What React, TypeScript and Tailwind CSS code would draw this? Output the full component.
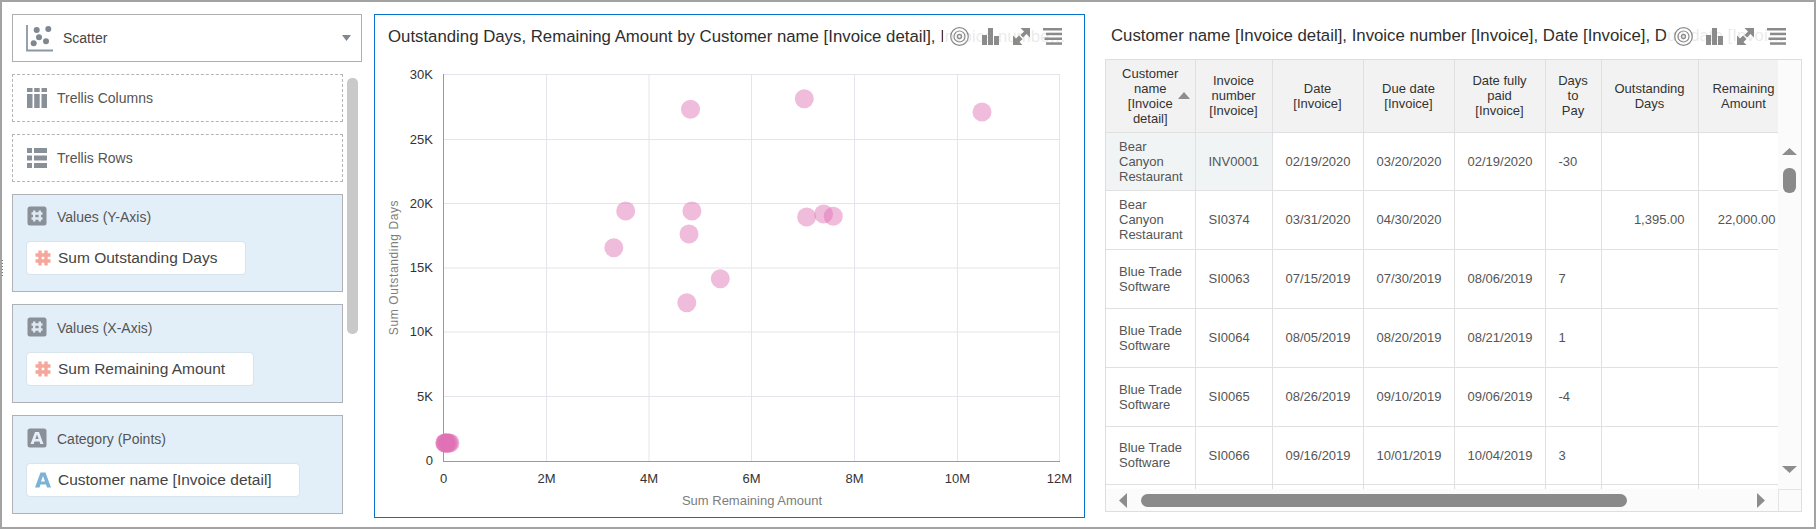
import React from "react";

const font = "font-['Liberation_Sans',Arial,sans-serif]";

function HashBadge() {
  return (
    <svg width="20" height="20" viewBox="0 0 20 20" className="shrink-0">
      <rect x="0.5" y="0.5" width="19" height="19" rx="2.5" fill="#8a9097" />
      <path d="M7.2 4.5v11M12.8 4.5v11M4.5 7.5h11M4.5 12.5h11" stroke="#dfe9f2" strokeWidth="2.4" fill="none" />
    </svg>
  );
}
function ABadge() {
  return (
    <svg width="20" height="20" viewBox="0 0 20 20" className="shrink-0">
      <rect x="0.5" y="0.5" width="19" height="19" rx="2.5" fill="#8a9097" />
      <path d="M3.5 16 8 4h4l4.5 12h-3.2l-.8-2.4h-5l-.8 2.4zM8.3 11h3.4L10 6.5z" fill="#e6eff7" fillRule="evenodd" />
    </svg>
  );
}
function HashChip() {
  return (
    <svg width="16" height="16" viewBox="0 0 16 16" className="shrink-0">
      <path d="M5 0.5v15M11 0.5v15M0.5 5h15M0.5 11h15" stroke="#f5a79c" strokeWidth="3.4" fill="none" />
    </svg>
  );
}
function AChip() {
  return (
    <svg width="16" height="16" viewBox="0 0 16 16" className="shrink-0">
      <path d="M0 15.5 5.5 0.5h5l5.500 15h-4l-1-3h-5.500l-1 3zM6 9.500h4L8 4z" fill="#7cb2d6" fillRule="evenodd" />
    </svg>
  );
}

function TitleIcons() {
  return (
    <>
      <svg width="19" height="19" viewBox="0 0 19 19" fill="none" stroke="#8b8b8b">
        <circle cx="9.500" cy="9.500" r="8.800" strokeWidth="1.200" />
        <circle cx="9.500" cy="9.500" r="5.500" strokeWidth="1.200" />
        <circle cx="9.500" cy="9.500" r="2" strokeWidth="1.300" />
      </svg>
      <svg width="17" height="17" viewBox="0 0 17 17" fill="#8b8b8b">
        <rect x="0" y="7" width="5" height="10" />
        <rect x="6" y="0" width="5" height="17" />
        <rect x="12" y="8" width="5" height="9" />
      </svg>
      <svg width="17" height="17" viewBox="0 0 17 17" fill="#8b8b8b">
        <path d="M7.500 0H17V9.500L13.500 6 10 9.500 7.500 7 11 3.500z" />
        <path d="M0 7.500 3 10.500 6 7.500 9.500 11 6.500 14 9.500 17H0z" />
      </svg>
      <svg width="19" height="17" viewBox="0 0 19 17" fill="#8b8b8b">
        <rect x="0" y="0" width="19" height="2.500" />
        <rect x="3" y="4.700" width="16" height="2.500" />
        <rect x="1.500" y="9.500" width="17.500" height="2.500" />
        <rect x="3" y="14.300" width="16" height="2.500" />
      </svg>
    </>
  );
}

function Drop({ icon, label }: { icon: React.ReactNode; label: string }) {
  return (
    <div className="h-[48px] shrink-0 border border-dashed border-[#b5b5b5] flex items-center pl-[14px] gap-[10px] text-[14px] text-[#555]">
      {icon}
      <span>{label}</span>
    </div>
  );
}

function Well({ badge, label, chipIcon, chip, chipW, boxH, padT }: { badge: React.ReactNode; label: string; chipIcon: React.ReactNode; chip: string; chipW: string; boxH: string; padT: string }) {
  return (
    <div className={`shrink-0 border border-[#aeb2b6] bg-[#e2eff9] pl-[13px] ${boxH} ${padT}`}>
      <div className="flex items-center gap-[10px] h-[20px] ml-px text-[14px] text-[#555]">
        {badge}
        <span className="mt-[2px]">{label}</span>
      </div>
      <div className={`mt-[15px] h-[34px] bg-white rounded-[4px] border border-[#d9e3ec] flex items-center pl-[8px] gap-[7px] text-[15.500px] text-[#444] ${chipW}`}>
        {chipIcon}
        <span className="whitespace-nowrap">{chip}</span>
      </div>
    </div>
  );
}

const xs = [443.5, 546.5, 649, 751.5, 854.5, 957.5, 1059.5];
const xl = ["0", "2M", "4M", "6M", "8M", "10M", "12M"];
const ys = [461, 396.5, 332, 268, 203.5, 139.5, 74.5];
const yl = ["0", "5K", "10K", "15K", "20K", "25K", "30K"];
const pts: [number, number][] = [
  [690.5, 109.3], [804.3, 98.7], [982, 112], [625.7, 211], [691.9, 211], [689, 234], [613.8, 247.7],
  [806.6, 217], [823.6, 214], [833.3, 216.3], [720.3, 278.7], [686.8, 302.7],
  [445, 443], [446, 443], [447, 443], [448, 443], [450, 443], [445.500, 443], [444.800, 443], [449, 443],
];

function Chart() {
  const ox = 375, oy = 59;
  return (
    <svg width="709" height="458" viewBox={`${ox} ${oy} 709 458`} className="block shrink-0">
      {xs.slice(1).map((x, i) => (
        <line key={i} x1={x} x2={x} y1={74} y2={461} stroke="#e4e5ea" strokeWidth="1" />
      ))}
      {ys.slice(1).map((y, i) => (
        <line key={i} x1={443} x2={1060} y1={y} y2={y} stroke="#e4e5ea" strokeWidth="1" />
      ))}
      <line x1={443.5} x2={443.5} y1={74} y2={461} stroke="#9a9a9a" />
      <line x1={443} x2={1060} y1={461.5} y2={461.5} stroke="#9a9a9a" />
      {pts.map(([x, y], i) => (
        <circle key={i} cx={x} cy={y} r={9.5} fill="#e070b4" fillOpacity="0.47" />
      ))}
      <g fontFamily="'Liberation Sans',Arial,sans-serif" fontSize="13" fill="#333">
        {yl.map((t, i) => (
          <text key={t} x={433} y={ys[i] + 4} textAnchor="end">{t}</text>
        ))}
        {xl.map((t, i) => (
          <text key={t} x={xs[i]} y={483} textAnchor="middle">{t}</text>
        ))}
      </g>
      <g fontFamily="'Liberation Sans',Arial,sans-serif" fontSize="13" fill="#7d7d7d">
        <text x={752} y={505} textAnchor="middle">Sum Remaining Amount</text>
        <text transform="translate(398 267.5) rotate(-90)" textAnchor="middle" fontSize="12" letterSpacing="0.6">Sum Outstanding Days</text>
      </g>
    </svg>
  );
}

const widths = [89, 77, 91, 91, 91, 56, 97, 91];
const headers = ["Customer name [Invoice detail]", "Invoice number [Invoice]", "Date [Invoice]", "Due date [Invoice]", "Date fully paid [Invoice]", "Days to Pay", "Outstanding Days", "Remaining Amount"];
const rows: string[][] = [
  ["Bear Canyon Restaurant", "INV0001", "02/19/2020", "03/20/2020", "02/19/2020", "-30", "", ""],
  ["Bear Canyon Restaurant", "SI0374", "03/31/2020", "04/30/2020", "", "", "1,395.00", "22,000.00"],
  ["Blue Trade Software", "SI0063", "07/15/2019", "07/30/2019", "08/06/2019", "7", "", ""],
  ["Blue Trade Software", "SI0064", "08/05/2019", "08/20/2019", "08/21/2019", "1", "", ""],
  ["Blue Trade Software", "SI0065", "08/26/2019", "09/10/2019", "09/06/2019", "-4", "", ""],
  ["Blue Trade Software", "SI0066", "09/16/2019", "10/01/2019", "10/04/2019", "3", "", ""],
  ["", "", "", "", "", "", "", ""],
];

function DataTable() {
  return (
    <div className="w-[697px] h-[453px] shrink-0 border border-[#dedede] flex flex-col bg-[#fbfbfb]">
      <div className="flex h-[429px] shrink-0">
        <div className="w-[672px] shrink-0 overflow-hidden bg-white relative">
          <table className="table-fixed border-collapse w-[683px] text-[13px] leading-[15px]">
            <colgroup>
              {widths.map((w, i) => <col key={i} style={{ width: w }} />)}
            </colgroup>
            <thead>
              <tr className="h-[72px] bg-[#f2f2f2]">
                {headers.map((h, i) => (
                  <th key={i} className={`border-r border-b border-[#e0e0e0] font-normal text-[#333] text-center ${i === 1 ? "px-[6px]" : i === 5 ? "px-[12px]" : i >= 6 ? "px-[6px]" : "px-[14px]"}`}>
                    {h}
                  </th>
                ))}
              </tr>
            </thead>
            <tbody>
              {rows.map((r, ri) => (
                <tr key={ri} className={ri === 0 || ri === 5 ? "h-[58px]" : "h-[59px]"}>
                  {r.map((c, ci) => (
                    <td key={ci} className={`border-r border-b border-[#e0e0e0] pl-[13px] ${ci === 0 ? "pr-[8px]" : "pr-[13px]"} text-[#555] ${ci >= 6 ? "text-right" : "text-left"} ${ri === 0 && ci < 2 ? "bg-[#f0f4f5]" : ""}`}>
                      {c}
                    </td>
                  ))}
                </tr>
              ))}
            </tbody>
          </table>
          <svg width="12" height="7" viewBox="0 0 12 7" className="absolute left-[72px] top-[32px]">
            <path d="M6 0 12 7H0z" fill="#8d8d8d" />
          </svg>
        </div>
        <div className="flex-1 flex flex-col items-center pt-[88px]">
          <svg width="15" height="7" viewBox="0 0 15 7" className="shrink-0"><path d="M7.500 0 15 7H0z" fill="#8d8d8d" /></svg>
          <div className="mt-[13px] w-[13px] h-[25px] rounded-[6px] bg-[#8a8a8a]" />
          <div className="flex-1" />
          <svg width="15" height="7" viewBox="0 0 15 7" className="mb-[16px] shrink-0"><path d="M7.500 7 15 0H0z" fill="#8d8d8d" /></svg>
        </div>
      </div>
      <div className="flex-1 flex">
        <div className="w-[672px] shrink-0 flex items-center pl-[13px] pr-[13px]">
          <svg width="8" height="15" viewBox="0 0 8 15" className="shrink-0"><path d="M0 7.500 8 0V15z" fill="#8d8d8d" /></svg>
          <div className="ml-[14px] w-[486px] h-[13px] rounded-[7px] bg-[#8a8a8a]" />
          <div className="flex-1" />
          <svg width="8" height="15" viewBox="0 0 8 15" className="shrink-0"><path d="M8 7.500 0 0V15z" fill="#8d8d8d" /></svg>
        </div>
        <div className="flex-1 border-l border-t border-[#e4e4e4]" />
      </div>
    </div>
  );
}

function PanelTitle({ text, box }: { text: string; box: "chart" | "table" }) {
  const chart = box === "chart";
  return (
    <div className={`relative shrink-0 ${chart ? "h-[44px] pl-[13px] pr-[16px]" : "h-[45px] pl-[6px] pr-[23px]"}`}>
      <div className="pt-[11px] leading-[22px] text-[16.800px] text-[#2e2e2e] whitespace-nowrap overflow-hidden text-ellipsis">{text}</div>
      <div className={`absolute right-0 h-[24px] bg-white/90 pl-[7px] flex items-center justify-between ${chart ? "top-[9px] w-[141px] pr-[22px]" : "top-[10px] w-[147px] pr-[28px]"}`}>
        <TitleIcons />
      </div>
    </div>
  );
}

export default function App() {
  return (
    <div className={`w-[1816px] h-[529px] border-2 border-[#a3a3a3] bg-white flex overflow-hidden relative ${font}`}>
      <div className="absolute -left-[2px] top-[258px] w-[3px] h-[18px] bg-[repeating-linear-gradient(180deg,#777_0,#777_1px,#fff_1px,#fff_3px)]" />
      <div className="w-[372px] shrink-0 pl-[10px] pt-[12px] flex flex-col">
        <div className="w-[350px] h-[48px] shrink-0 border border-[#aeaeae] flex items-center pl-[13px] pr-[10px] text-[14px] text-[#444]">
          <svg width="28" height="27" viewBox="0 0 28 27" className="shrink-0">
            <path d="M1 0V25.500H27" fill="none" stroke="#8b97a5" strokeWidth="1.800" />
            <g fill="#7f8790">
              <circle cx="10.700" cy="5" r="3" /><circle cx="22.300" cy="4" r="3" /><circle cx="13" cy="12.300" r="3" />
              <circle cx="20" cy="16.300" r="3" /><circle cx="7.700" cy="18.300" r="3" />
            </g>
          </svg>
          <span className="ml-[9px]">Scatter</span>
          <div className="flex-1" />
          <svg width="9" height="6" viewBox="0 0 9 6"><path d="M0 0H9L4.500 6z" fill="#7f8790" /></svg>
        </div>
        <div className="flex mt-[12px] min-h-0 flex-1">
          <div className="w-[331px] shrink-0 flex flex-col gap-[12px]">
            <Drop label="Trellis Columns" icon={
              <svg width="20" height="20" viewBox="0 0 20 20" fill="#8a9097" className="shrink-0">
                <rect x="0" y="0" width="5.500" height="4" /><rect x="7.200" y="0" width="5.500" height="4" /><rect x="14.500" y="0" width="5.500" height="4" />
                <rect x="0" y="6" width="5.500" height="14" /><rect x="7.200" y="6" width="5.500" height="14" /><rect x="14.500" y="6" width="5.500" height="14" />
              </svg>} />
            <Drop label="Trellis Rows" icon={
              <svg width="20" height="20" viewBox="0 0 20 20" fill="#8a9097" className="shrink-0">
                <rect x="0" y="0" width="5" height="5" /><rect x="7" y="0" width="13" height="5" />
                <rect x="0" y="7.500" width="5" height="5" /><rect x="7" y="7.500" width="13" height="5" />
                <rect x="0" y="15" width="5" height="5" /><rect x="7" y="15" width="13" height="5" />
              </svg>} />
            <Well boxH="h-[98px]" padT="pt-[11px]" badge={<HashBadge />} label="Values (Y-Axis)" chipIcon={<HashChip />} chip="Sum Outstanding Days" chipW="w-[220px]" />
            <Well boxH="h-[99px]" padT="pt-[12px]" badge={<HashBadge />} label="Values (X-Axis)" chipIcon={<HashChip />} chip="Sum Remaining Amount" chipW="w-[228px]" />
            <Well boxH="h-[99px]" padT="pt-[12px]" badge={<ABadge />} label="Category (Points)" chipIcon={<AChip />} chip="Customer name [Invoice detail]" chipW="w-[274px]" />
          </div>
          <div className="ml-[4px] mt-[4px] w-[11px] h-[256px] rounded-[5px] bg-[#c9c9c9]" />
        </div>
      </div>
      <div className="w-[711px] h-[504px] mt-[12px] shrink-0 border border-[#0572ce] flex flex-col">
        <PanelTitle box="chart" text="Outstanding Days, Remaining Amount by Customer name [Invoice detail], Invoice number [Invoice]" />
        <Chart />
      </div>
      <div className="ml-[20px] mt-[12px] flex-1 min-w-0 flex flex-col">
        <PanelTitle box="table" text="Customer name [Invoice detail], Invoice number [Invoice], Date [Invoice], Due date [Invoice], Date fully paid" />
        <DataTable />
      </div>
    </div>
  );
}
